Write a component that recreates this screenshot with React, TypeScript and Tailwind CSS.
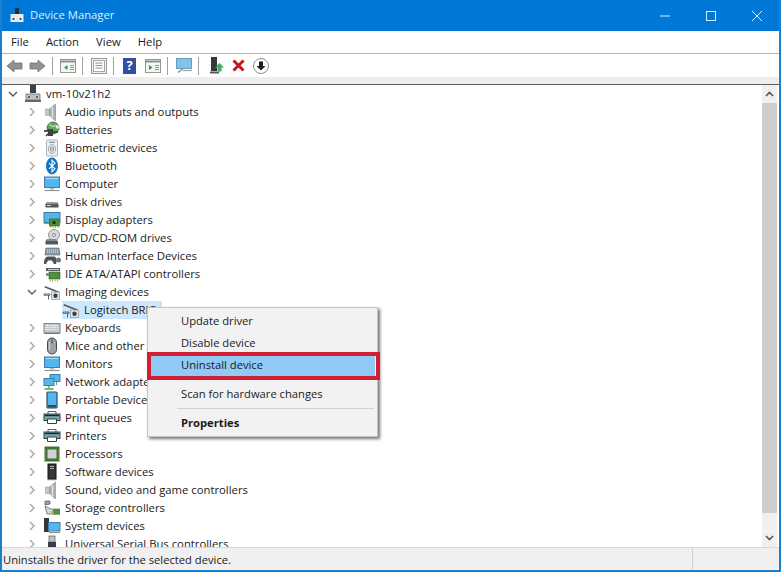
import React from "react";

const font = { fontFamily: '"Open Sans", "Noto Sans", sans-serif' };

function Ic({ children, w = 18, h = 18 }: { children: React.ReactNode; w?: number; h?: number }) {
  return (
    <svg width={w} height={h} viewBox={`0 0 ${w} ${h}`} className="shrink-0" fill="none">
      {children}
    </svg>
  );
}

const Speaker = () => (
  <Ic>
    <path d="M2.500 6h4v6.500h-4z" fill="#c4c8ca" stroke="#9a9ea1" strokeWidth=".6" />
    <path d="M6.500 6l6-5v17l-6-5.500z" fill="#a9aeb1" stroke="#85898c" strokeWidth=".6" />
    <path d="M9.500 4v11" stroke="#e0e2e3" strokeWidth="1.500" />
  </Ic>
);
const Battery = () => (
  <Ic>
    <circle cx="10" cy="7" r="6" fill="#62a85c" stroke="#2f6b31" strokeWidth=".8" />
    <path d="M6 3l3 2.500 5-1" stroke="#d5eccd" strokeWidth="1" />
    <path d="M1 10h5M3 15l3-3" stroke="#222" strokeWidth="1.300" />
    <path d="M5 8h5v7H5z" fill="#3c4146" />
    <path d="M10 11h5" stroke="#222" strokeWidth="1.300" />
    <circle cx="14.500" cy="6" r="1.800" fill="#e2e4e5" />
  </Ic>
);
const Bio = () => (
  <Ic>
    <rect x="3.500" y="1" width="11" height="16" rx="1" fill="#edf1f4" stroke="#a4b4c0" />
    <ellipse cx="9" cy="10" rx="3.500" ry="4.500" stroke="#6d7a85" strokeWidth="1" strokeDasharray="1 .6" />
    <path d="M9 6.500v7M7.500 8v4M10.500 8v4" stroke="#6d7a85" strokeWidth=".7" />
    <path d="M6 3.300h6" stroke="#6d7a85" />
  </Ic>
);
const Bluetooth = () => (
  <Ic>
    <ellipse cx="9" cy="9" rx="6" ry="8.500" fill="#0f74c4" />
    <path d="M6 6.200l6 5.600-3 3V3.200l3 3-6 5.600" stroke="#fff" strokeWidth="1.100" />
  </Ic>
);
const Monitor = () => (
  <Ic>
    <rect x="1.500" y="2" width="15" height="10.500" fill="#54b6ee" stroke="#3d7fa8" />
    <path d="M3 3.500h12" stroke="#a9def8" />
    <path d="M7 13h4v1.500H7z" fill="#b4b8ba" />
    <path d="M1.500 15.500h15" stroke="#8d9498" strokeWidth="1.200" />
  </Ic>
);
const Disk = () => (
  <Ic>
    <path d="M2.500 11.500l1.500-2.500h10l1.500 2.500v3h-13z" fill="#55595c" />
    <path d="M4 10h10" stroke="#c4c7c9" strokeWidth="1.200" />
    <path d="M4 12.500h4" stroke="#d6d8d9" />
  </Ic>
);
const Display = () => (
  <Ic>
    <rect x="1" y="1.500" width="16" height="10" fill="#57b3e8" stroke="#3d7fa8" />
    <path d="M1 12.500h7" stroke="#8d9498" strokeWidth="1.200" />
    <rect x="6.500" y="8" width="10" height="7" fill="#4e8f3e" stroke="#2b5a24" strokeWidth=".6" />
    <path d="M7.500 15v2M10 15v2M12.500 15v2M15 15v2" stroke="#c8a23a" />
    <rect x="9.500" y="10" width="3" height="3" fill="#1d3a17" />
  </Ic>
);
const Dvd = () => (
  <Ic>
    <circle cx="11" cy="6" r="5.500" fill="#d6dadd" stroke="#93999d" />
    <circle cx="11" cy="6" r="1.500" fill="#fff" stroke="#7f8589" />
    <path d="M2.500 12.500l1.500-2.500h9l2 2.500v3h-12.500z" fill="#55595c" />
    <path d="M4 11h10" stroke="#bfc2c4" />
  </Ic>
);
const Hid = () => (
  <Ic>
    <path d="M3 1h13l1 7H2z" fill="#8b9aa5" stroke="#56636c" strokeWidth=".6" />
    <path d="M4 3h11M4 5h11" stroke="#e2e7ea" strokeDasharray="1 1" />
    <path d="M5 9.500c-3 0-4 4-4 7.500h2l2-3.500c1 0 3 0 4 0l2 3.500h2c1-2 1-7.500-2-7.500z" fill="#4c5257" />
    <circle cx="15.500" cy="13" r="2.500" fill="#6f767b" />
  </Ic>
);
const Ide = () => (
  <Ic>
    <path d="M3 3h14v3H3z" fill="#55595c" />
    <path d="M5 4.500h11" stroke="#cfd2d3" />
    <rect x="6" y="7" width="11" height="7" fill="#4f8f3f" stroke="#2c5a25" strokeWidth=".6" />
    <path d="M7 14.500v2M9.500 14.500v2M12 14.500v2M14.500 14.500v2" stroke="#c8a23a" />
    <path d="M3 8h3v3H3z" fill="#85898c" />
  </Ic>
);
const Camera = () => (
  <Ic>
    <path d="M2 3l14 5.500-.8 1.500L1.500 4.500z" fill="#54595d" />
    <rect x="8.500" y="9" width="8" height="7.500" fill="#e3e6e8" stroke="#8a9095" strokeWidth=".7" />
    <circle cx="12.500" cy="12.700" r="2.200" fill="#3a3f43" />
    <path d="M1 11h6v1.200H1zM5.500 12v4.500" stroke="#5f6468" />
  </Ic>
);
const Keyboard = () => (
  <Ic>
    <rect x="1" y="4.500" width="16" height="9.500" fill="#c4c9cc" stroke="#7e858a" />
    <path d="M2.500 6.500h13M2.500 8.500h13M2.500 10.500h13" stroke="#f5f6f7" strokeDasharray="1 .6" />
    <path d="M1.500 14.500h15" stroke="#6d7377" />
  </Ic>
);
const Mouse = () => (
  <Ic>
    <rect x="4.500" y="1" width="9" height="16" rx="4.500" fill="#9ea3a7" stroke="#3f4448" />
    <path d="M9 1.500v5" stroke="#3f4448" />
    <path d="M6.500 5v8" stroke="#d2d5d7" />
  </Ic>
);
const Network = () => (
  <Ic>
    <rect x="7" y="1.500" width="10" height="7" fill="#54b6ee" stroke="#3d7fa8" />
    <rect x="1" y="5.500" width="10" height="7" fill="#54b6ee" stroke="#3d7fa8" />
    <path d="M6 13v2M1.500 16h9" stroke="#46a24a" strokeWidth="1.300" />
    <path d="M13.500 9v3" stroke="#7c8286" />
  </Ic>
);
const Portable = () => (
  <Ic>
    <rect x="4" y="1" width="10" height="16" rx="1" fill="#54b6ee" stroke="#2f4e63" strokeWidth="1.200" />
    <path d="M5 14h8v2.500H5z" fill="#2f4e63" />
  </Ic>
);
const Printer = () => (
  <Ic>
    <path d="M5 2.500h8v3H5z" fill="#fff" stroke="#5b6165" />
    <rect x="1" y="5" width="16" height="6.500" fill="#6ea9ae" stroke="#3a4043" />
    <path d="M4.500 10h9v4.500h-9z" fill="#fff" stroke="#3a4043" />
    <path d="M2 6.500h14" stroke="#222" strokeWidth="1.300" />
  </Ic>
);
const Cpu = () => (
  <Ic>
    <rect x="1.500" y="1.500" width="15" height="15" fill="#3e7334" />
    <rect x="4.500" y="4.500" width="9" height="9" fill="#cfd3d3" />
    <path d="M1.500 5h1M1.500 8h1M1.500 11h1M1.500 14h1M15.500 5h1M15.500 8h1M15.500 11h1M15.500 14h1" stroke="#cbb75f" />
  </Ic>
);
const Software = () => (
  <Ic>
    <rect x="5" y="1" width="8" height="14.500" fill="#33373a" stroke="#111" />
    <path d="M7 3.500h4M7 5.500h4" stroke="#a9adb0" />
    <path d="M4.500 16.500h9" stroke="#76797b" strokeWidth="1.400" />
  </Ic>
);
const Storage = () => (
  <Ic>
    <path d="M2 2l5 0 0 3-5 1z" fill="#9aa0a4" stroke="#4e5356" strokeWidth=".7" />
    <path d="M2 7l6 3h8.500v5H4z" fill="#d4d7d9" stroke="#595e61" strokeWidth=".7" />
    <rect x="10" y="10" width="7" height="5.500" fill="#4f8f3f" />
    <path d="M8 12h2.500v3H8z" fill="#d3b23c" />
  </Ic>
);
const SystemDev = () => (
  <Ic>
    <rect x="1" y="1" width="5" height="14" fill="#33373a" />
    <rect x="5.500" y="5.500" width="11.500" height="8.500" fill="#54b6ee" stroke="#3d7fa8" />
    <path d="M6 15.500h11" stroke="#8d9498" strokeWidth="1.200" />
  </Ic>
);
const Usb = () => (
  <Ic>
    <rect x="6" y="1" width="6" height="6" fill="#bfc3c5" stroke="#54585b" strokeWidth=".7" />
    <rect x="5" y="7" width="8" height="10" fill="#393d40" />
  </Ic>
);
const Host = () => (
  <Ic w={20}>
    <rect x="7" y="0" width="6" height="8" fill="#3a3f43" />
    <path d="M3 9h14v6H3z" fill="#bfc3c6" stroke="#5e6367" strokeWidth=".7" />
    <path d="M2 15h16v2H2z" fill="#63686c" />
    <circle cx="6" cy="12" r="1" fill="#3f4448" />
    <circle cx="14" cy="12" r="1" fill="#3f4448" />
  </Ic>
);

function Chevron({ open }: { open?: boolean }) {
  return (
    <svg width="10" height="10" viewBox="0 0 10 10" className="shrink-0" fill="none">
      {open ? (
        <path d="M1 3l4 4 4-4" stroke="#5a5a5a" strokeWidth="1.400" />
      ) : (
        <path d="M3 1l4 4-4 4" stroke="#a6a6a6" strokeWidth="1.400" />
      )}
    </svg>
  );
}

const rows: [string, React.FC, boolean?][] = [
  ["Audio inputs and outputs", Speaker],
  ["Batteries", Battery],
  ["Biometric devices", Bio],
  ["Bluetooth", Bluetooth],
  ["Computer", Monitor],
  ["Disk drives", Disk],
  ["Display adapters", Display],
  ["DVD/CD-ROM drives", Dvd],
  ["Human Interface Devices", Hid],
  ["IDE ATA/ATAPI controllers", Ide],
  ["Imaging devices", Camera, true],
];
const rows2: [string, React.FC][] = [
  ["Keyboards", Keyboard],
  ["Mice and other pointing devices", Mouse],
  ["Monitors", Monitor],
  ["Network adapters", Network],
  ["Portable Devices", Portable],
  ["Print queues", Printer],
  ["Printers", Printer],
  ["Processors", Cpu],
  ["Software devices", Software],
  ["Sound, video and game controllers", Speaker],
  ["Storage controllers", Storage],
  ["System devices", SystemDev],
  ["Universal Serial Bus controllers", Usb],
];

function Row({ label, Icon, open }: { label: string; Icon: React.FC; open?: boolean }) {
  return (
    <div className="h-[18px] flex items-center pl-[25px] shrink-0 whitespace-nowrap">
      <Chevron open={open} />
      <span className="ml-[6px] mr-[4px] flex">
        <Icon />
      </span>
      <span>{label}</span>
    </div>
  );
}

function Sep() {
  return <div className="w-px h-[18px] bg-[#a0a0a0] mx-[6px] shrink-0" />;
}

function Toolbar() {
  return (
    <div className="h-[23px] flex items-center pl-[4px] bg-white shrink-0">
      <svg width="18" height="16" viewBox="0 0 18 16" fill="none">
        <path d="M1 8l7-6v3h8v6H8v3z" fill="#8e9295" stroke="#6e7275" strokeWidth=".8" />
      </svg>
      <svg width="18" height="16" viewBox="0 0 18 16" fill="none" className="ml-[4px]">
        <path d="M17 8l-7-6v3H2v6h8v3z" fill="#8e9295" stroke="#6e7275" strokeWidth=".8" />
      </svg>
      <Sep />
      <svg width="16" height="14" viewBox="0 0 16 14" fill="none" className="ml-[1px]">
        <rect x=".5" y=".5" width="15" height="13" fill="#f4f6f4" stroke="#8f9a90" />
        <path d="M1 2.500h14" stroke="#7f8a80" strokeWidth="1.800" />
        <path d="M7.500 6L4 8.500l3.500 2.500z" fill="#3f8f57" />
        <path d="M10 6.500h4M10 8.500h4M10 10.500h4" stroke="#8e9a90" />
      </svg>
      <Sep />
      <svg width="16" height="16" viewBox="0 0 16 16" fill="none" className="ml-[2px]">
        <rect x=".5" y=".5" width="15" height="15" fill="#f2f3f2" stroke="#999" />
        <rect x="2.500" y="2.500" width="11" height="11" fill="#fff" stroke="#a5a5a5" />
        <path d="M4.500 5h7M4.500 7.500h7M4.500 10h7" stroke="#8f8f8f" />
      </svg>
      <Sep />
      <div className="w-[13px] h-[16px] ml-[3px] bg-[#2f4fa8] text-white text-[13px] font-bold flex items-center justify-center leading-none shrink-0">
        ?
      </div>
      <svg width="16" height="14" viewBox="0 0 16 14" fill="none" className="ml-[9px]">
        <rect x=".5" y=".5" width="15" height="13" fill="#f4f6f4" stroke="#8f9a90" />
        <path d="M1 2.500h14" stroke="#7f8a80" strokeWidth="1.800" />
        <path d="M4 6l3.500 2.500L4 11z" fill="#3f8f57" />
        <path d="M10 6.500h4M10 8.500h4M10 10.500h4" stroke="#8e9a90" />
      </svg>
      <Sep />
      <svg width="16" height="15" viewBox="0 0 16 15" fill="none" className="ml-[2px]">
        <rect x=".5" y=".5" width="15" height="10" fill="#7fc4ec" stroke="#6f9db8" />
        <path d="M7 10.500l-5 4" stroke="#8a8f93" strokeWidth="1.400" />
        <path d="M7 12.500h9" stroke="#9aa0a4" strokeWidth="1.200" />
      </svg>
      <Sep />
      <svg width="14" height="17" viewBox="0 0 14 17" fill="none" className="ml-[5px]">
        <rect x="1" y="0" width="6" height="14" fill="#34393c" />
        <path d="M0 14.500h9v2H0z" fill="#55595c" />
        <path d="M9.500 6l4.500 4.500h-2.500v4h-4v-4H5z" fill="#46a86a" />
      </svg>
      <svg width="13" height="13" viewBox="0 0 13 13" fill="none" className="ml-[8px]">
        <path d="M1.500 1.500l10 10M11.500 1.500l-10 10" stroke="#c8161d" strokeWidth="3" />
      </svg>
      <svg width="16" height="16" viewBox="0 0 16 16" fill="none" className="ml-[8px]">
        <circle cx="8" cy="8" r="7.500" fill="#fff" stroke="#8d8d8d" />
        <path d="M6 3.500h4v4.500h2.500L8 12.500 3.500 8H6z" fill="#1c1c1c" />
      </svg>
    </div>
  );
}

export default function App() {
  return (
    <div
      style={font}
      className="w-[781px] h-[572px] flex flex-col bg-white text-[11.3px] text-[#1a1a1a] overflow-hidden relative border-x-2 border-b-2 border-[#1b7fc9]"
    >
      <div className="h-[31px] -mx-[2px] bg-[#0078d7] flex items-center shrink-0 pl-[10px]">
        <svg width="14" height="15" viewBox="0 0 14 15" fill="none">
          <rect x="5" y="0" width="4" height="6" fill="#20303c" />
          <rect x=".5" y="6" width="13" height="8" fill="#e4eaee" />
          <circle cx="3.500" cy="11" r="1" fill="#20303c" />
          <circle cx="10.500" cy="11" r="1" fill="#20303c" />
        </svg>
        <span className="ml-[6px] text-[11.3px] text-[#d5f2ff]">Device Manager</span>
        <div className="ml-auto flex items-center">
          <svg width="12" height="12" viewBox="0 0 12 12" fill="none" className="mr-[34px]">
            <path d="M1 6h10" stroke="#cdf0ff" strokeWidth="1" />
          </svg>
          <svg width="12" height="12" viewBox="0 0 12 12" fill="none" className="mr-[34px]">
            <rect x="1.500" y="1.500" width="9" height="9" stroke="#cdf0ff" strokeWidth="1" />
          </svg>
          <svg width="12" height="12" viewBox="0 0 12 12" fill="none" className="mr-[18px]">
            <path d="M1 1l10 10M11 1L1 11" stroke="#e0f5ff" strokeWidth="1" />
          </svg>
        </div>
      </div>

      <div className="h-[21px] flex items-center gap-[17px] pl-[9px] pt-[1px] border-b border-[#b4b4b4] shrink-0 box-content">
        <span>File</span>
        <span>Action</span>
        <span>View</span>
        <span>Help</span>
      </div>
      <Toolbar />
      <div className="h-[7px] bg-[#eeeeee] shrink-0" />
      <div className="h-px bg-[#5e5e5e] shrink-0" />

      <div className="flex-1 min-h-0 flex relative">
        <div className="flex-1 min-w-0 overflow-hidden flex flex-col">
          <div className="h-[18px] flex items-center pl-[6px] shrink-0">
            <Chevron open />
            <span className="ml-[5px] mr-[3px] flex">
              <Host />
            </span>
            <span>vm-10v21h2</span>
          </div>
          {rows.map(([l, I, o]) => (
            <Row key={l} label={l} Icon={I} open={o} />
          ))}
          <div className="h-[18px] flex items-center pl-[60px] shrink-0">
            <div className="flex items-center bg-[#cce8ff] h-[18px] pr-[4px]">
              <span className="mr-[4px] flex">
                <Camera />
              </span>
              <span>Logitech BRIO</span>
            </div>
          </div>
          {rows2.map(([l, I]) => (
            <Row key={l} label={l} Icon={I} />
          ))}
        </div>
        <div className="w-[15px] mr-[2px] bg-[#f0f0f0] flex flex-col shrink-0">
          <div className="h-[18px] flex items-center justify-center shrink-0">
            <svg width="9" height="6" viewBox="0 0 9 6" fill="none">
              <path d="M1 5l3.500-3.500L8 5" stroke="#555" strokeWidth="1.600" />
            </svg>
          </div>
          <div className="h-[410px] bg-[#cdcdcd]" />
          <div className="mt-auto h-[18px] flex items-center justify-center shrink-0">
            <svg width="9" height="6" viewBox="0 0 9 6" fill="none">
              <path d="M1 1l3.500 3.500L8 1" stroke="#555" strokeWidth="1.600" />
            </svg>
          </div>
        </div>
      </div>

      <div className="h-[23px] shrink-0 bg-[#f0f0f0] border-t border-[#d7d7d7] flex items-center text-[11.2px]">
        <span className="pl-[1px] pt-[3px] flex-1">Uninstalls the driver for the selected device.</span>
        <div className="w-[87px] h-full border-l border-[#d0d0d0]" />
      </div>

      <div className="absolute left-[145px] top-[307px] w-[231px] h-[130px] bg-[#f2f2f2] border border-[#c4c4c4] shadow-[2px_2px_3px_rgba(0,0,0,0.55)] flex flex-col pt-[2px] px-[2px] text-[11.2px]">
        <div className="h-[22px] flex items-center pl-[31px]">Update driver</div>
        <div className="h-[22px] flex items-center pl-[31px]">Disable device</div>
        <div className="h-[22px] flex items-center pl-[31px] bg-[#91c9f7]">Uninstall device</div>
        <div className="h-[7px] shrink-0" />
        <div className="h-[22px] flex items-center pl-[31px]">Scan for hardware changes</div>
        <div className="h-[7px] flex items-center ml-[27px] mr-[1px] shrink-0">
          <div className="h-px w-full bg-[#d2d2d2]" />
        </div>
        <div className="h-[22px] flex items-center pl-[31px] font-bold">Properties</div>
      </div>
      <div className="absolute left-[145px] top-[352px] w-[233px] h-[28px] border-[4px] border-[#cf1f33]" />
    </div>
  );
}
